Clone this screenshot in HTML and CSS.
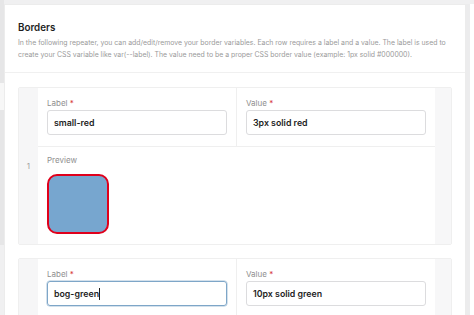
FILE: index.html
```html
<!DOCTYPE html>
<html>
<head>
<meta charset="utf-8">
<link rel="stylesheet" href="styles.css">
</head>
<body>
<div class="page">
  <div class="edge">
    <div class="edge-top"></div>
    <div class="edge-gap"></div>
    <div class="edge-bottom"></div>
  </div>
  <div class="panel">
    <div class="header">
      <h2 class="title">Borders</h2>
      <p class="desc">In the following repeater, you can add/edit/remove your border variables. Each row requires a label and a value. The label is used to create your CSS variable like var(--label). The value need to be a proper CSS border value (example: 1px solid #000000).</p>
    </div>
    <div class="body">
      <div class="row">
        <div class="handle">1</div>
        <div class="fields">
          <div class="pair">
            <div class="cell">
              <div class="label">Label <span class="req">*</span></div>
              <div class="input">small-red</div>
            </div>
            <div class="cell cell-right">
              <div class="label">Value <span class="req">*</span></div>
              <div class="input">3px solid red</div>
            </div>
          </div>
          <div class="preview">
            <div class="label">Preview</div>
            <div class="swatch"></div>
          </div>
        </div>
        <div class="side"></div>
      </div>
      <div class="row">
        <div class="handle"></div>
        <div class="fields">
          <div class="pair">
            <div class="cell">
              <div class="label">Label <span class="req">*</span></div>
              <div class="input focus">bog-green<span class="caret"></span></div>
            </div>
            <div class="cell cell-right">
              <div class="label">Value <span class="req">*</span></div>
              <div class="input">10px solid green</div>
            </div>
          </div>
        </div>
        <div class="side"></div>
      </div>
    </div>
  </div>
  <div class="gutter"></div>
  <div class="strip"></div>
</div>
</body>
</html>
```

FILE: styles.css
```css
* { box-sizing: border-box; }
html, body { margin: 0; padding: 0; }
body {
  background: #f0f0f1;
  font-family: Inter, "Noto Sans", "Liberation Sans", sans-serif;
  color: #1e1e1e;
  width: 474px;
  height: 315px;
  overflow: hidden;
}
.page {
  display: flex;
  padding-top: 4px;
  height: 315px;
  overflow: hidden;
}
.edge {
  width: 4px;
  flex: none;
  display: flex;
  flex-direction: column;
  margin-top: -4px;
}
.edge-top {
  height: 83px;
  background: #e6e6e7;
}
.edge-gap {
  height: 27px;
  background: #f7f7f7;
}
.edge-bottom {
  height: 135px;
  background: #e6e6e7;
}
.panel {
  width: 462px;
  flex: none;
  background: #fff;
  border: 1px solid #ececec;
  border-bottom: none;
}
.gutter {
  width: 4px;
  flex: none;
  background: #ececed;
}
.strip {
  flex: 1;
  background: #fff;
}
.header {
  padding: 16px 13px 0 13px;
  height: 68px;
  border-bottom: 1px solid #f0f0f0;
}
.title {
  margin: 0;
  font-size: 9.8px;
  font-weight: 600;
  line-height: 14px;
  color: #1e1e1e;
}
.desc {
  margin: 2px 0 0 0;
  font-size: 6.9px;
  line-height: 12px;
  color: #9a9a9a;
}
.body {
  padding: 14px 13px 0 13px;
  display: flex;
  flex-direction: column;
  gap: 13px;
}
.row {
  display: flex;
  border: 1px solid #efefef;
  border-radius: 2px;
}
.handle {
  width: 19px;
  flex: none;
  background: #f6f6f7;
  color: #a0a0a0;
  font-size: 8px;
  display: flex;
  align-items: center;
  justify-content: center;
}
.fields {
  flex: 1;
  display: flex;
  flex-direction: column;
}
.side {
  width: 16px;
  flex: none;
  background: #f7f7f8;
}
.pair {
  display: flex;
}
.cell {
  flex: 1;
  padding: 8px 9px 11px 9px;
}
.cell-right {
  border-left: 1px solid #efefef;
}
.label {
  font-size: 8px;
  line-height: 14px;
  color: #8f8f8f;
}
.req {
  color: #d63638;
}
.input {
  height: 25px;
  border: 1px solid #dcdcde;
  border-radius: 3px;
  padding: 0 0 0 6px;
  font-size: 8.8px;
  font-weight: 600;
  color: #1e1e1e;
  display: flex;
  align-items: center;
}
.input.focus {
  border-color: #7ea6c8;
  box-shadow: 0 0 0 0.5px #a9c3da;
}
.caret {
  display: inline-block;
  width: 1px;
  height: 12px;
  background: #1e1e1e;
}
.preview {
  border-top: 1px solid #efefef;
  padding: 6px 9px 10px 9px;
}
.swatch {
  margin-top: 7px;
  width: 62px;
  height: 60px;
  background: #77a6cf;
  border: 2px solid #e0001b;
  border-radius: 10px;
}
```
